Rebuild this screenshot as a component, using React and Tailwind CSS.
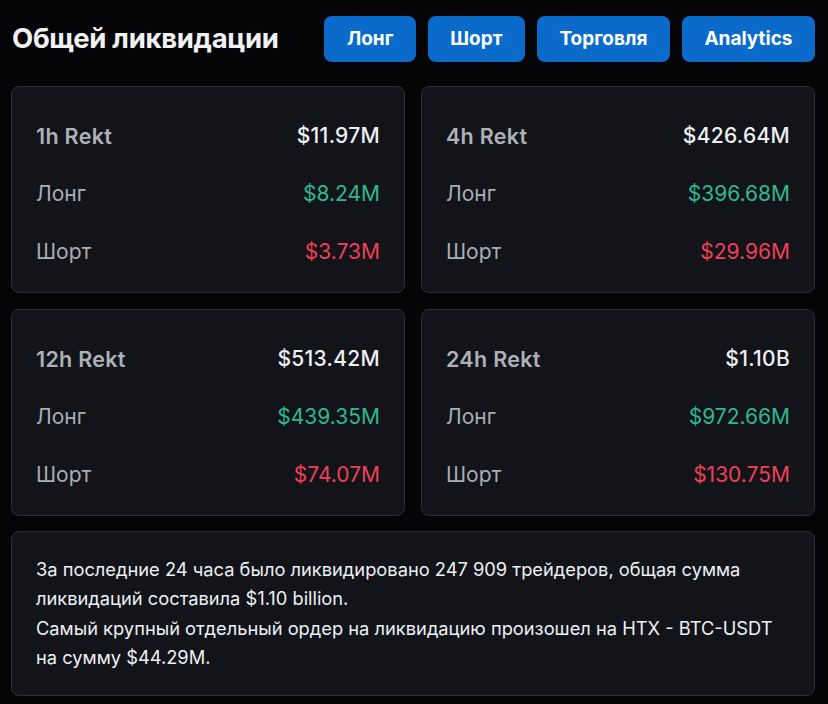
import React from 'react';

const stats = [
    { title: '1h Rekt', total: '$11.97M', long: '$8.24M', short: '$3.73M' },
    { title: '4h Rekt', total: '$426.64M', long: '$396.68M', short: '$29.96M' },
    { title: '12h Rekt', total: '$513.42M', long: '$439.35M', short: '$74.07M' },
    { title: '24h Rekt', total: '$1.10B', long: '$972.66M', short: '$130.75M' },
];

const tabs = ['Лонг', 'Шорт', 'Торговля', 'Analytics'];

const StatCard = ({ title, total, long, short }) => (
    <div className="flex flex-col h-[207px] px-[24px] pt-[20px] pb-[11px] bg-[#12141a] border border-[#2c2f36] rounded-lg">
        <div className="flex-1 flex items-center justify-between">
            <span className="text-[21.5px] font-semibold tracking-[0.3px] text-[#aeb1b8]">{title}</span>
            <span className="text-[21px] font-medium tracking-[0.3px] text-[#eef0f3]">{total}</span>
        </div>
        <div className="flex-1 flex items-center justify-between">
            <span className="text-[21px] text-[#a9adb4]">Лонг</span>
            <span className="text-[21px] text-[#2fb88d]">{long}</span>
        </div>
        <div className="flex-1 flex items-center justify-between">
            <span className="text-[21px] text-[#a9adb4]">Шорт</span>
            <span className="text-[21px] text-[#ef4056]">{short}</span>
        </div>
    </div>
);

export default function App() {
    return (
        <div className="min-h-screen w-[828px] h-[704px] bg-[#050508] text-white px-[11px] pt-[16px] font-['Inter','Noto_Sans',sans-serif]">
            {/* Header */}
            <div className="flex items-center justify-between pr-[2px]">
                <h1 className="pl-[1px] text-[27.5px] font-bold tracking-[-0.3px] text-[#f1f2f4]">Общей ликвидации</h1>
                <div className="flex gap-[12px]">
                    {tabs.map(t => (
                        <button
                            key={t}
                            className="h-[46px] px-[22.5px] bg-[#0b6bcb] rounded-lg text-[19px] font-bold text-white"
                        >
                            {t}
                        </button>
                    ))}
                </div>
            </div>

            {/* Stat grid */}
            <div className="grid grid-cols-2 gap-x-[16px] gap-y-[16px] mt-[24px] pr-[2px]">
                {stats.map(s => <StatCard key={s.title} {...s} />)}
            </div>

            {/* Summary */}
            <div className="mt-[15px] mr-[2px] h-[165px] px-[24px] flex items-center bg-[#12141a] border border-[#2c2f36] rounded-lg">
                <p className="text-[18.3px] leading-[29.5px] text-[#eef0f3]">
                    За последние 24 часа было ликвидировано 247 909 трейдеров, общая сумма ликвидаций составила $1.10 billion.
                    <br />
                    Самый крупный отдельный ордер на ликвидацию произошел на HTX - BTC-USDT на сумму $44.29M.
                </p>
            </div>
        </div>
    );
}
